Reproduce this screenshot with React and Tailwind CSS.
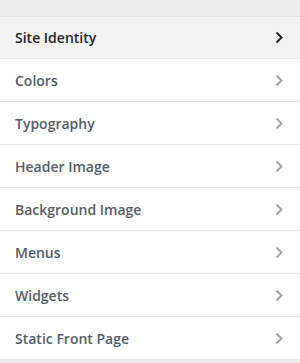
const items = ['Site Identity', 'Colors', 'Typography', 'Header Image', 'Background Image', 'Menus', 'Widgets', 'Static Front Page']

const Chevron = ({ active }) => (
  <svg width="8" height="13" viewBox="0 0 8 13" className={active ? 'text-[#23282d]' : 'text-[#a0a5aa]'}>
    <path d="M1.5 1.5 L6.5 6.5 L1.5 11.5" fill="none" stroke="currentColor" strokeWidth="2" />
  </svg>
)

export default function App() {
  return (
    <div className="w-[300px] h-[363px] bg-[#eeeeee] pt-[16px] overflow-hidden" style={{ fontFamily: '"Open Sans", sans-serif' }}>
      <ul>
        {items.map((item, i) => (
          <li
            key={item}
            className={`h-[43px] flex items-center justify-between pl-[15px] pr-[17px] border-b border-[#e2e4e7] text-[14px] font-semibold ${i === 0 ? 'bg-[#f3f3f3] text-[#23282d] border-t border-t-[#e2e4e7]' : 'bg-white text-[#555d66]'}`}
          >
            <span>{item}</span>
            <Chevron active={i === 0} />
          </li>
        ))}
      </ul>
    </div>
  )
}
